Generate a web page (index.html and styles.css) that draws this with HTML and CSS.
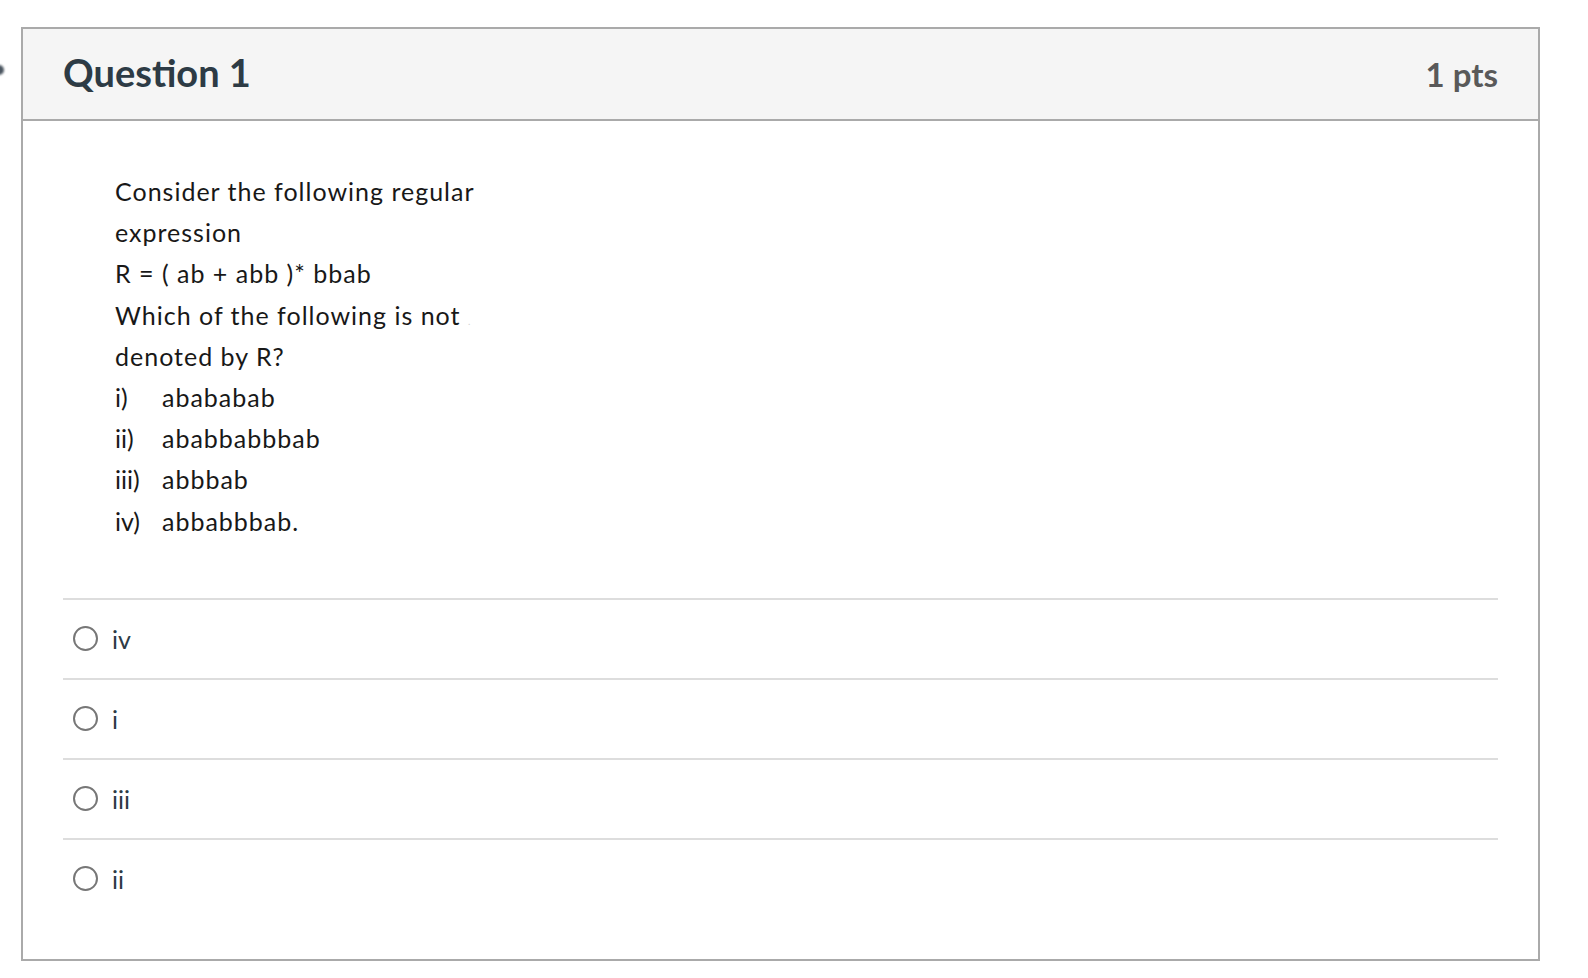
FILE: index.html
```html
<!DOCTYPE html>
<html>

<head>
    <meta name="viewport" content="width=device-width, initial-scale=1.0">
    <link rel="stylesheet" href="styles.css">
</head>

<body>
    <div class="flag-dot"></div>
    <div class="page">
        <div class="question">
            <div class="question-header">
                <h2 class="question-title">Question 1</h2>
                <span class="question-points">1 pts</span>
            </div>

            <div class="question-body">
                <div class="question-text">
                    <p>Consider the following regular</p>
                    <p>expression</p>
                    <p>R = ( ab + abb )* bbab</p>
                    <p>Which of the following is not <span class="speck">.</span></p>
                    <p>denoted by R?</p>
                    <p><span class="num">i)</span>abababab</p>
                    <p><span class="num">ii)</span>ababbabbbab</p>
                    <p><span class="num">iii)</span>abbbab</p>
                    <p><span class="num">iv)</span>abbabbbab.</p>
                </div>

                <div class="answers">
                    <label class="answer"><span class="radio"></span>iv</label>
                    <label class="answer"><span class="radio"></span>i</label>
                    <label class="answer"><span class="radio"></span>iii</label>
                    <label class="answer"><span class="radio"></span>ii</label>
                </div>
            </div>
        </div>
    </div>
</body>

</html>
```

FILE: styles.css
```css
* {
    box-sizing: border-box;
}

body {
    background-color: white;
    color: #2d3b45;
    font-family: 'Lato', sans-serif;
    margin: 0;
    padding: 0;
    position: relative;
}

.page {
    padding: 27px 48px 0 21px;
}

.flag-dot {
    position: absolute;
    top: 65px;
    left: -6px;
    width: 10px;
    height: 10px;
    border-radius: 50%;
    background: #4a5560;
    filter: blur(1px);
}

.question {
    border: 2px solid #aaaaaa;
    background: white;
}

.question-header {
    height: 92px;
    padding: 21px 40px 0 40px;
    background: #f5f5f5;
    border-bottom: 2px solid #aaaaaa;
    display: flex;
    justify-content: space-between;
    align-items: baseline;
}

.question-title {
    margin: 0;
    font-size: 38px;
    font-weight: 700;
    line-height: 1.2;
    color: #2d3b45;
}

.question-points {
    font-size: 33px;
    font-weight: 700;
    color: #595959;
}

.question-body {
    padding: 50px 40px 41px 40px;
}

.question-text {
    padding-left: 52px;
    font-size: 25px;
    letter-spacing: 1px;
    line-height: 41.2px;
    color: #181818;
}

.question-text p {
    margin: 0;
}

.question-text .num {
    display: inline-block;
    width: 47px;
    letter-spacing: 0;
}

.speck {
    color: #d0d0d0;
    font-size: 10px;
    line-height: 0;
}

.answers {
    margin-top: 56px;
}

.answer {
    height: 80px;
    border-top: 2px solid #dddddd;
    display: flex;
    align-items: center;
    gap: 14px;
    padding-left: 10px;
    font-size: 25px;
    color: #2d3b45;
}

.radio {
    width: 25px;
    height: 25px;
    border: 2px solid #777777;
    border-radius: 50%;
}
```
